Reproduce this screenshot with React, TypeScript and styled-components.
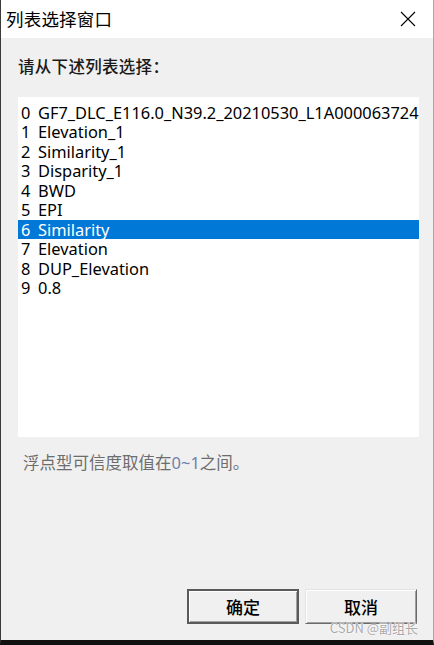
import React from "react";
import styled, { createGlobalStyle } from "styled-components";

const Global = createGlobalStyle`
  html, body { margin: 0; padding: 0; background: #1a1a1a; }
  body { width: 434px; height: 645px; overflow: hidden; }
  * { box-sizing: border-box; }
`;

const Window = styled.div`
  position: relative;
  width: 434px;
  height: 645px;
  display: flex;
  flex-direction: column;
  border-left: 1px solid #3a3a3a;
  border-right: 1px solid #a8a8a8;
  border-bottom: 5px solid #111;
  font-family: "Noto Sans CJK SC", "Noto Sans", sans-serif;
`;

const TitleBar = styled.div`
  height: 38px;
  flex: none;
  background: #ffffff;
  display: flex;
  align-items: center;
  justify-content: space-between;
  padding: 0 17px 0 5px;
`;

const Title = styled.div`
  font-size: 17.5px;
  color: #000;
  letter-spacing: 0.2px;
  line-height: 20px;
`;

const CloseIcon = styled.svg`
  width: 16px;
  height: 16px;
  display: block;
`;

const Body = styled.div`
  flex: 1;
  background: #f0f0f0;
  display: flex;
  flex-direction: column;
  padding: 18px 14px 16px 17px;
`;

const Label = styled.div`
  font-size: 16.5px;
  line-height: 20px;
  color: #1a1a1a;
  font-weight: 500;
  letter-spacing: 0.3px;
`;

const ListBox = styled.div`
  margin-top: 21px;
  height: 340px;
  background: #ffffff;
  padding-top: 6px;
  overflow: hidden;
`;

const Row = styled.div<{ $selected?: boolean }>`
  height: 19.45px;
  line-height: 19.45px;
  display: flex;
  align-items: center;
  padding-left: 3px;
  white-space: nowrap;
  font-family: "Noto Sans", "Noto Sans CJK SC", sans-serif;
  font-size: 16.4px;
  color: ${(p) => (p.$selected ? "#ffffff" : "#000000")};
  background: ${(p) => (p.$selected ? "#0078d7" : "transparent")};
`;

const Num = styled.span`
  width: 17px;
  flex: none;
`;

const Hint = styled.div`
  margin-top: 15px;
  padding-left: 5px;
  font-size: 16.5px;
  line-height: 20px;
  color: #6d6d6d;
`;

const HintNum = styled.span`
  color: #7080ad;
  font-family: "Noto Sans", sans-serif;
`;

const ButtonRow = styled.div`
  margin-top: auto;
  display: flex;
  justify-content: flex-end;
  gap: 6px;
  padding-right: 2px;
`;

const Button = styled.button<{ $default?: boolean }>`
  width: 112px;
  height: 35px;
  background: #f0f0f0;
  font-family: "Noto Sans CJK SC", sans-serif;
  font-size: 17px;
  line-height: 20px;
  font-weight: 500;
  color: #000;
  padding: 0;
  border-style: solid;
  border-width: ${(p) => (p.$default ? "2px" : "1px")};
  border-color: ${(p) =>
    p.$default ? "#5a5a5a" : "#e3e3e3 #696969 #696969 #e3e3e3"};
  box-shadow: inset 1px 1px #ffffff, inset -1px -1px #a0a0a0;
`;

const Watermark = styled.div`
  position: absolute;
  right: 15px;
  bottom: 4px;
  font-family: "Noto Sans CJK SC", "Noto Sans", sans-serif;
  font-size: 13px;
  line-height: 16px;
  color: #a9a9a9;
  text-shadow: 0 0 1px #ffffff, 0 0 1px #ffffff, 0 0 2px #ffffff;
  pointer-events: none;
`;

const items = [
  "GF7_DLC_E116.0_N39.2_20210530_L1A0000637243",
  "Elevation_1",
  "Similarity_1",
  "Disparity_1",
  "BWD",
  "EPI",
  "Similarity",
  "Elevation",
  "DUP_Elevation",
  "0.8",
];

export default function App() {
  return (
    <>
      <Global />
      <Window>
        <TitleBar>
          <Title>列表选择窗口</Title>
          <CloseIcon viewBox="0 0 16 16">
            <path d="M1 1 L15 15 M15 1 L1 15" stroke="#000" strokeWidth="1.1" fill="none" />
          </CloseIcon>
        </TitleBar>
        <Body>
          <Label>请从下述列表选择：</Label>
          <ListBox>
            {items.map((name, i) => (
              <Row key={i} $selected={i === 6}>
                <Num>{i}</Num>
                {name}
              </Row>
            ))}
          </ListBox>
          <Hint>
            浮点型可信度取值在<HintNum>0~1</HintNum>之间。
          </Hint>
          <ButtonRow>
            <Button $default>确定</Button>
            <Button>取消</Button>
          </ButtonRow>
        </Body>
        <Watermark>CSDN @副组长</Watermark>
      </Window>
    </>
  );
}
